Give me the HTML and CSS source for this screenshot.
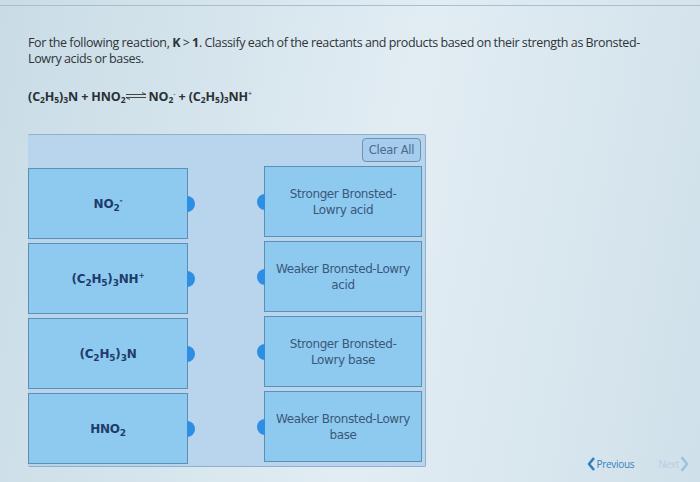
FILE: index.html
```html
<!DOCTYPE html>
<html>
<head>
<meta charset="utf-8">
<link rel="stylesheet" href="styles.css">
</head>
<body>
<div class="page">
  <div class="topline"></div>
  <div class="content">
    <p class="question">For the following reaction, <b>K</b> &gt; <b>1</b>. Classify each of the reactants and products based on their strength as Bronsted-<br>Lowry acids or bases.</p>
    <p class="equation">(C<sub>2</sub>H<sub>5</sub>)<sub>3</sub>N + HNO<sub>2</sub><svg class="eq-arrow" width="22" height="8" viewBox="0 0 22 8"><path d="M1 2.5 H21 L17 0.5" fill="none" stroke="#333" stroke-width="0.9"/><path d="M21 5.5 H1 L5 7.5" fill="none" stroke="#333" stroke-width="0.9"/></svg>NO<sub>2</sub><sup>-</sup> + (C<sub>2</sub>H<sub>5</sub>)<sub>3</sub>NH<sup>+</sup></p>

    <div class="panel">
      <div class="panel-head">
        <button class="clear-btn">Clear All</button>
      </div>
      <div class="columns">
        <div class="col col-left">
          <div class="box item"><span>NO<sub>2</sub><sup>-</sup></span></div>
          <div class="box item"><span>(C<sub>2</sub>H<sub>5</sub>)<sub>3</sub>NH<sup>+</sup></span></div>
          <div class="box item"><span>(C<sub>2</sub>H<sub>5</sub>)<sub>3</sub>N</span></div>
          <div class="box item"><span>HNO<sub>2</sub></span></div>
        </div>
        <div class="col col-right">
          <div class="box target"><span>Stronger Bronsted-<br>Lowry acid</span></div>
          <div class="box target"><span>Weaker Bronsted-Lowry<br>acid</span></div>
          <div class="box target"><span>Stronger Bronsted-<br>Lowry base</span></div>
          <div class="box target"><span>Weaker Bronsted-Lowry<br>base</span></div>
        </div>
      </div>
    </div>
  </div>
  <div class="nav">
    <span class="nav-btn prev"><svg width="8" height="14" viewBox="0 0 8 14"><path d="M7 1 L2 7 L7 13" fill="none" stroke="#2f7fc4" stroke-width="2.6" stroke-linejoin="round"/></svg>Previous</span>
    <span class="nav-btn next">Next<svg width="9" height="16" viewBox="0 0 9 16"><path d="M1.5 1 L7 8 L1.5 15" fill="none" stroke="#9cc4e4" stroke-width="2.8" stroke-linejoin="round"/></svg></span>
  </div>
</div>
</body>
</html>
```

FILE: styles.css
```css
html, body {
  margin: 0;
  padding: 0;
}
body {
  width: 700px;
  height: 482px;
  overflow: hidden;
  background: linear-gradient(100deg, #c9dce6 0%, #d6e5ed 30%, #e2edf3 55%, #d8e6ee 80%, #cfe0ea 100%);
  font-family: "Open Sans", "Liberation Sans", sans-serif;
}
.page {
  position: relative;
  width: 700px;
  height: 482px;
}
.topline {
  height: 5px;
  border-bottom: 1px solid #a9bfcd;
}
.content {
  padding-left: 28px;
}
.question {
  margin: 29px 0 0 0;
  font-size: 12.5px;
  line-height: 16px;
  color: #2e3338;
  letter-spacing: -0.35px;
  word-spacing: -0.3px;
}
.question b {
  font-weight: 700;
}
.equation {
  margin: 22px 0 0 0;
  font-size: 12.5px;
  font-weight: 700;
  color: #2a2f35;
  letter-spacing: -0.1px;
  line-height: 16px;
}
.equation sub {
  font-size: 8.5px;
  vertical-align: -2px;
  line-height: 0;
}
.equation sup {
  font-size: 7px;
  font-weight: 400;
  vertical-align: 5px;
  line-height: 0;
}
.eq-arrow {
  vertical-align: 1px;
  margin: 0 1px 0 0;
}
.panel {
  margin-top: 29px;
  width: 398px;
  height: 333px;
  box-sizing: border-box;
  background: #b9d5ed;
  border: 1px solid #8fb0cc;
  border-left: none;
  border-radius: 2px;
  display: flex;
  flex-direction: column;
}
.panel-head {
  display: flex;
  justify-content: flex-end;
  padding: 3px 4px 0 0;
  height: 25px;
}
.clear-btn {
  width: 59px;
  height: 24px;
  border: 1px solid #6f90b0;
  border-radius: 4px;
  background: #a6cdee;
  color: #4b6a88;
  font-family: "DejaVu Sans", Verdana, sans-serif;
  font-size: 11.5px;
  letter-spacing: -0.3px;
  padding: 0;
}
.columns {
  display: flex;
  justify-content: space-between;
  padding-right: 3px;
}
.col {
  display: flex;
  flex-direction: column;
  gap: 4px;
}
.col-left {
  width: 160px;
  margin-top: 5px;
}
.col-right {
  width: 158px;
  margin-top: 3px;
}
.box {
  position: relative;
  height: 71px;
  box-sizing: border-box;
  background: #8ecaf0;
  border: 1px solid #5d8fb6;
  display: flex;
  align-items: center;
  justify-content: center;
  text-align: center;
  font-family: "DejaVu Sans", Verdana, sans-serif;
  font-size: 12px;
  line-height: 16px;
}
.item {
  color: #1e3c6b;
  font-weight: 700;
  letter-spacing: -0.2px;
}
.target {
  color: #3a5878;
  letter-spacing: -0.4px;
}
.box sub {
  font-size: 9px;
  vertical-align: -3px;
  line-height: 0;
}
.box sup {
  font-size: 7.5px;
  vertical-align: 5px;
  line-height: 0;
}
.item::after {
  content: "";
  position: absolute;
  right: -8px;
  top: 50%;
  margin-top: -8px;
  width: 8px;
  height: 16px;
  border-radius: 0 8px 8px 0;
  background: #2d8ee3;
}
.target::before {
  content: "";
  position: absolute;
  left: -8px;
  top: 50%;
  margin-top: -8px;
  width: 8px;
  height: 16px;
  border-radius: 8px 0 0 8px;
  background: #2d8ee3;
}
.nav {
  position: absolute;
  right: 11px;
  bottom: 10px;
  display: flex;
  gap: 24px;
  align-items: center;
}
.nav-btn {
  display: flex;
  align-items: center;
  gap: 1px;
  font-family: "Open Sans", "Liberation Sans", sans-serif;
  font-size: 10px;
  letter-spacing: -0.3px;
}
.prev {
  color: #3a7fbf;
}
.next {
  color: #b4d0e4;
}
```
